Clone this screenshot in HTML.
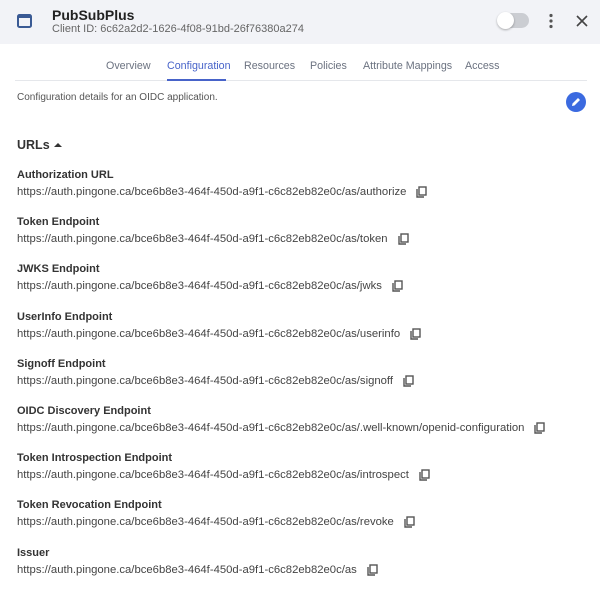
<!DOCTYPE html>
<html><head><style>
body{margin:0;width:600px;height:611px;background:#fff;font-family:"Liberation Sans",Arial,sans-serif;color:#2e3440;position:relative;overflow:hidden}
.hdr{position:absolute;left:0;top:0;width:600px;height:44px;background:#f2f3f7}
.abs{position:absolute;white-space:nowrap}
.tab{position:absolute;top:60px;font-size:10.7px;color:#6b7280}
.lbl{position:absolute;left:17px;font-size:11px;font-weight:bold;color:#333}
.url{position:absolute;left:17px;font-size:11.3px;color:#444;white-space:nowrap}
.cp{display:inline-block;vertical-align:middle;margin-left:10px}
</style></head><body>
<div class="hdr"></div>
<svg class="abs" style="left:17px;top:14px" width="15" height="14" viewBox="0 0 15 14"><rect x="1" y="1" width="13" height="12" rx="1.5" fill="none" stroke="#3a5a94" stroke-width="2"/><rect x="1" y="1" width="13" height="3" fill="#3a5a94"/></svg>
<div class="abs" style="left:52px;top:7px;font-size:14px;font-weight:bold;color:#222">PubSubPlus</div>
<div class="abs" style="left:52px;top:23px;font-size:11px;color:#666">Client ID: 6c62a2d2-1626-4f08-91bd-26f76380a274</div>
<div class="abs" style="left:498px;top:13px;width:31px;height:15px;border-radius:8px;background:#cbcdd2"></div>
<div class="abs" style="left:497px;top:12px;width:17px;height:17px;border-radius:50%;background:#fff;box-shadow:0 1px 2px rgba(0,0,0,.3)"></div>
<svg class="abs" style="left:548px;top:13px" width="6" height="16"><circle cx="3" cy="2.5" r="1.6" fill="#555"/><circle cx="3" cy="8" r="1.6" fill="#555"/><circle cx="3" cy="13.5" r="1.6" fill="#555"/></svg>
<svg class="abs" style="left:576px;top:15px" width="12" height="12"><path d="M1 1L11 11M11 1L1 11" stroke="#444" stroke-width="1.6"/></svg>
<div class="tab" style="left:106px">Overview</div>
<div class="tab" style="left:167px;color:#4763c9">Configuration</div>
<div class="tab" style="left:244px">Resources</div>
<div class="tab" style="left:310px">Policies</div>
<div class="tab" style="left:363px">Attribute Mappings</div>
<div class="tab" style="left:465px">Access</div>
<div class="abs" style="left:15px;top:80px;width:572px;height:1px;background:#e5e7eb"></div>
<div class="abs" style="left:167px;top:79px;width:59px;height:2px;background:#4763c9"></div>
<div class="abs" style="left:17px;top:92px;font-size:10px;color:#555">Configuration details for an OIDC application.</div>
<div class="abs" style="left:566px;top:92px;width:20px;height:20px;border-radius:50%;background:#3b6ae0"></div>
<svg class="abs" style="left:570px;top:96px" width="12" height="12" viewBox="0 0 12 12"><path d="M2 10L2.5 7.5L8 2L10 4L4.5 9.5Z" fill="#fff"/></svg>
<div class="abs" style="left:17px;top:138px;font-size:12.5px;font-weight:bold;color:#333">URLs</div>
<svg class="abs" style="left:54px;top:142px" width="8" height="5"><path d="M0 5L4 1L8 5Z" fill="#333"/></svg>
<div class="lbl" style="top:169px">Authorization URL</div>
<div class="url" style="top:186px">https://auth.pingone.ca/bce6b8e3-464f-450d-a9f1-c6c82eb82e0c/as/authorize<svg class="cp" width="11" height="12"><rect x="3" y="1" width="7" height="8" fill="none" stroke="#555" stroke-width="1.4"/><path d="M1 3V11H8" fill="none" stroke="#555" stroke-width="1.4"/></svg></div>
<div class="lbl" style="top:216px">Token Endpoint</div>
<div class="url" style="top:233px">https://auth.pingone.ca/bce6b8e3-464f-450d-a9f1-c6c82eb82e0c/as/token<svg class="cp" width="11" height="12"><rect x="3" y="1" width="7" height="8" fill="none" stroke="#555" stroke-width="1.4"/><path d="M1 3V11H8" fill="none" stroke="#555" stroke-width="1.4"/></svg></div>
<div class="lbl" style="top:263px">JWKS Endpoint</div>
<div class="url" style="top:280px">https://auth.pingone.ca/bce6b8e3-464f-450d-a9f1-c6c82eb82e0c/as/jwks<svg class="cp" width="11" height="12"><rect x="3" y="1" width="7" height="8" fill="none" stroke="#555" stroke-width="1.4"/><path d="M1 3V11H8" fill="none" stroke="#555" stroke-width="1.4"/></svg></div>
<div class="lbl" style="top:311px">UserInfo Endpoint</div>
<div class="url" style="top:328px">https://auth.pingone.ca/bce6b8e3-464f-450d-a9f1-c6c82eb82e0c/as/userinfo<svg class="cp" width="11" height="12"><rect x="3" y="1" width="7" height="8" fill="none" stroke="#555" stroke-width="1.4"/><path d="M1 3V11H8" fill="none" stroke="#555" stroke-width="1.4"/></svg></div>
<div class="lbl" style="top:358px">Signoff Endpoint</div>
<div class="url" style="top:375px">https://auth.pingone.ca/bce6b8e3-464f-450d-a9f1-c6c82eb82e0c/as/signoff<svg class="cp" width="11" height="12"><rect x="3" y="1" width="7" height="8" fill="none" stroke="#555" stroke-width="1.4"/><path d="M1 3V11H8" fill="none" stroke="#555" stroke-width="1.4"/></svg></div>
<div class="lbl" style="top:405px">OIDC Discovery Endpoint</div>
<div class="url" style="top:422px">https://auth.pingone.ca/bce6b8e3-464f-450d-a9f1-c6c82eb82e0c/as/.well-known/openid-configuration<svg class="cp" width="11" height="12"><rect x="3" y="1" width="7" height="8" fill="none" stroke="#555" stroke-width="1.4"/><path d="M1 3V11H8" fill="none" stroke="#555" stroke-width="1.4"/></svg></div>
<div class="lbl" style="top:452px">Token Introspection Endpoint</div>
<div class="url" style="top:469px">https://auth.pingone.ca/bce6b8e3-464f-450d-a9f1-c6c82eb82e0c/as/introspect<svg class="cp" width="11" height="12"><rect x="3" y="1" width="7" height="8" fill="none" stroke="#555" stroke-width="1.4"/><path d="M1 3V11H8" fill="none" stroke="#555" stroke-width="1.4"/></svg></div>
<div class="lbl" style="top:499px">Token Revocation Endpoint</div>
<div class="url" style="top:516px">https://auth.pingone.ca/bce6b8e3-464f-450d-a9f1-c6c82eb82e0c/as/revoke<svg class="cp" width="11" height="12"><rect x="3" y="1" width="7" height="8" fill="none" stroke="#555" stroke-width="1.4"/><path d="M1 3V11H8" fill="none" stroke="#555" stroke-width="1.4"/></svg></div>
<div class="lbl" style="top:547px">Issuer</div>
<div class="url" style="top:564px">https://auth.pingone.ca/bce6b8e3-464f-450d-a9f1-c6c82eb82e0c/as<svg class="cp" width="11" height="12"><rect x="3" y="1" width="7" height="8" fill="none" stroke="#555" stroke-width="1.4"/><path d="M1 3V11H8" fill="none" stroke="#555" stroke-width="1.4"/></svg></div>
</body></html>
